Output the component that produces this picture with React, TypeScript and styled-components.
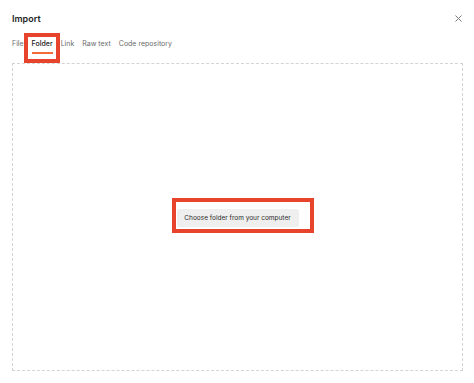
import React from "react";
import styled, { createGlobalStyle } from "styled-components";

const Global = createGlobalStyle`
  html, body { margin: 0; padding: 0; background: #ffffff; }
  body { font-family: Inter, "Noto Sans", sans-serif; color: #222; }
`;

const Dialog = styled.div`
  width: 474px;
  height: 383px;
  box-sizing: border-box;
  padding: 12px 11px 12px 12px;
  display: flex;
  flex-direction: column;
`;

const Header = styled.div`
  display: flex;
  align-items: center;
  justify-content: space-between;
  height: 13px;
`;

const Title = styled.h1`
  margin: 0;
  font-size: 9px;
  font-weight: 600;
  color: #1f1f1f;
`;

const Close = styled.button`
  border: 0;
  background: none;
  padding: 0;
  width: 8px;
  height: 8px;
  margin-right: 1px;
  display: flex;
  align-items: center;
  justify-content: center;
  color: #777;
`;

const Tabs = styled.div`
  display: flex;
  gap: 8px;
  margin-top: 12px;
  height: 18px;
`;

const Tab = styled.span<{ $active?: boolean; $marked?: boolean }>`
  position: relative;
  font-size: 7px;
  line-height: 10px;
  padding-top: 2px;
  white-space: nowrap;
  color: ${(p) => (p.$active ? "#212121" : "#6b6b6b")};
  font-weight: ${(p) => (p.$active ? 500 : 400)};
  ${(p) =>
    p.$active &&
    `&::before {
      content: "";
      position: absolute;
      left: 0;
      right: 0;
      top: 15px;
      height: 1.5px;
      background: #f26b3a;
    }`}
  ${(p) =>
    p.$marked &&
    `&::after {
      content: "";
      position: absolute;
      left: -8px;
      right: -7px;
      top: -4px;
      bottom: -8px;
      border: 4px solid #e8432c;
    }`}
`;

const DropZone = styled.div`
  margin-top: 8px;
  flex: 0 0 308px;
  box-sizing: border-box;
  border: 1px dashed #d4d4d4;
  display: flex;
  align-items: center;
  justify-content: center;
`;

const Marked = styled.div`
  position: relative;
  display: inline-flex;
  margin-top: 2px;
  &::after {
    content: "";
    position: absolute;
    left: -5px;
    right: -15px;
    top: -11px;
    bottom: -6px;
    border: 4px solid #e8432c;
  }
`;

const PickButton = styled.button`
  border: 0;
  background: #efefef;
  border-radius: 2px;
  height: 18px;
  width: 122px;
  padding: 0;
  font-family: Inter, "Noto Sans", sans-serif;
  font-size: 6.5px;
  white-space: nowrap;
  color: #2a2a2a;
  display: flex;
  align-items: center;
  justify-content: center;
`;

export default function App() {
  return (
    <>
      <Global />
      <Dialog>
        <Header>
          <Title>Import</Title>
          <Close aria-label="Close">
            <svg width="7" height="7" viewBox="0 0 7 7">
              <path d="M0.5 0.5L6.5 6.5M6.5 0.5L0.5 6.5" stroke="#7a7a7a" strokeWidth="1" />
            </svg>
          </Close>
        </Header>
        <Tabs>
          <Tab>File</Tab>
          <Tab $active $marked>Folder</Tab>
          <Tab>Link</Tab>
          <Tab>Raw text</Tab>
          <Tab>Code repository</Tab>
        </Tabs>
        <DropZone>
          <Marked>
            <PickButton>Choose folder from your computer</PickButton>
          </Marked>
        </DropZone>
      </Dialog>
    </>
  );
}
